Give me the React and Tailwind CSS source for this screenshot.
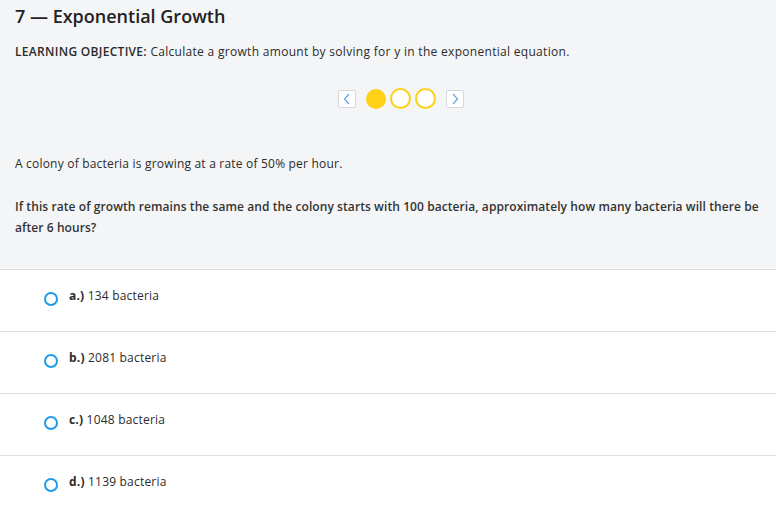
const options = [
  { key: 'a.)', text: '134 bacteria' },
  { key: 'b.)', text: '2081 bacteria' },
  { key: 'c.)', text: '1048 bacteria' },
  { key: 'd.)', text: '1139 bacteria' },
]

export default function App() {
  return (
    <div className="w-[776px] h-[514px] bg-white text-[#2b2b2b] overflow-hidden" style={{ fontFamily: '"Open Sans", Lato, sans-serif' }}>
      {/* Question header */}
      <div className="bg-[#f4f5f7] px-[15px] pt-[4px] pb-[31px] border-b border-[#dcdde0]">
        <h1 className="text-[18px] font-semibold leading-[24px] text-[#222]">7 — Exponential Growth</h1>
        <p className="mt-[16px] text-[12px] leading-[16px] tracking-[0.3px]">
          <span className="font-semibold">LEARNING OBJECTIVE:</span> Calculate a growth amount by solving for y in the exponential equation.
        </p>

        {/* Pager */}
        <div className="mt-[28px] flex items-center justify-center gap-[4px] pl-[26px]">
          <button className="w-[18px] h-[18px] flex items-center justify-center bg-white border border-[#d6d7da] rounded-[2px] mr-[6px]">
            <svg width="8" height="12" viewBox="0 0 8 12" fill="none" stroke="#6aa3e8" strokeWidth="1.2"><path d="M6 1L1.5 6L6 11" /></svg>
          </button>
          <span className="w-[20px] h-[20px] rounded-full bg-[#fcd116]" />
          <span className="w-[21px] h-[21px] rounded-full bg-white border-[2px] border-[#fcd116]" />
          <span className="w-[21px] h-[21px] rounded-full bg-white border-[2px] border-[#fcd116]" />
          <button className="w-[18px] h-[18px] flex items-center justify-center bg-white border border-[#d6d7da] rounded-[2px] ml-[6px]">
            <svg width="8" height="12" viewBox="0 0 8 12" fill="none" stroke="#6aa3e8" strokeWidth="1.2"><path d="M2 1L6.5 6L2 11" /></svg>
          </button>
        </div>

        <p className="mt-[47px] text-[12px] leading-[16px] tracking-[0.2px]">A colony of bacteria is growing at a rate of 50% per hour.</p>
        <p className="mt-[24px] -mr-[14px] text-[12px] leading-[21px] font-semibold tracking-[0.08px] text-[#333]">
          If this rate of growth remains the same and the colony starts with 100 bacteria, approximately how many bacteria will there be after 6 hours?
        </p>
      </div>

      {/* Answer choices */}
      {options.map((o) => (
        <div key={o.key} className="h-[62px] border-b border-[#dcdde0] flex items-start pl-[44px] pt-[18px]">
          <span className="mt-[4px] w-[14px] h-[14px] rounded-full border-[2px] border-[#1e9be9] shrink-0" />
          <span className="ml-[11px] text-[12px] leading-[16px] tracking-[0.2px]">
            <span className="font-bold">{o.key}</span> {o.text}
          </span>
        </div>
      ))}
    </div>
  )
}
